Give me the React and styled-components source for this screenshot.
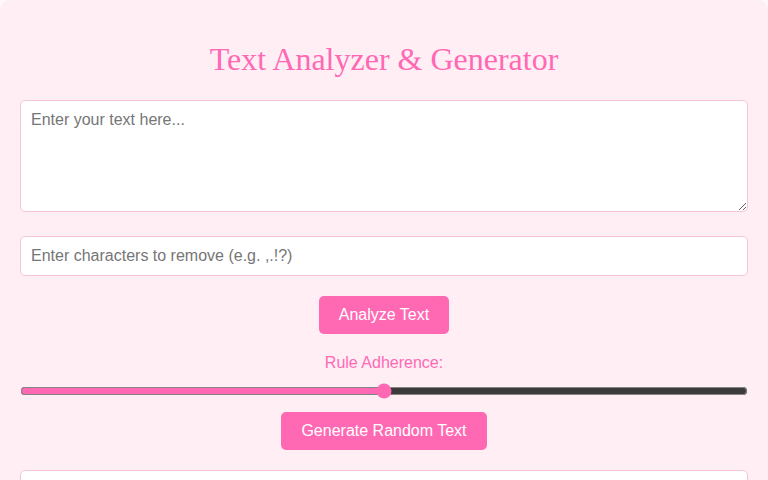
import styled, { createGlobalStyle } from "styled-components";
import { useState } from "react";

const GlobalStyle = createGlobalStyle`
    body {
        margin: 0;
        background-color: #fff7fa;
        font-family: "Liberation Sans", Arial, sans-serif;
    }
`;

function App(){
    const [text, setText] = useState("");
    const [chars, setChars] = useState("");
    const [adherence, setAdherence] = useState(50);

    return (
        <>
            <GlobalStyle />
            <Container>
                <Title>Text Analyzer &amp; Generator</Title>
                <TextArea
                    placeholder="Enter your text here..."
                    value={text}
                    onChange={(e) => setText(e.target.value)}
                />
                <Input
                    type="text"
                    placeholder="Enter characters to remove (e.g. ,.!?)"
                    value={chars}
                    onChange={(e) => setChars(e.target.value)}
                />
                <Button>Analyze Text</Button>
                <Label>Rule Adherence:</Label>
                <Slider
                    type="range"
                    min="0"
                    max="100"
                    value={adherence}
                    onChange={(e) => setAdherence(e.target.value)}
                />
                <Button>Generate Random Text</Button>
                <Output />
            </Container>
        </>
    );
}

const Container = styled.div`
    max-width: 800px;
    margin: 0 auto;
    padding: 20px;
    box-sizing: border-box;
    background-color: #ffeef4;
    border-radius: 10px;
    display: flex;
    flex-direction: column;
    align-items: center;
    min-height: 520px;
`;

const Title = styled.h1`
    font-family: "Liberation Serif", "Times New Roman", serif;
    font-weight: normal;
    font-size: 32px;
    color: #ff69b4;
    margin: 21px 0 22px;
    text-align: center;
`;

const TextArea = styled.textarea`
    width: 100%;
    height: 112px;
    padding: 10px;
    box-sizing: border-box;
    border: 1px solid #f5c6d6;
    border-radius: 5px;
    background: white;
    font-family: "Liberation Sans", Arial, sans-serif;
    font-size: 16px;
    margin: 0 0 24px;
    display: block;

    &::placeholder {
        color: #767676;
    }
`;

const Input = styled.input`
    width: 100%;
    height: 40px;
    padding: 10px;
    box-sizing: border-box;
    border: 1px solid #f5c6d6;
    border-radius: 5px;
    background: white;
    font-family: "Liberation Sans", Arial, sans-serif;
    font-size: 16px;
    margin: 0 0 20px;

    &::placeholder {
        color: #767676;
    }
`;

const Button = styled.button`
    background-color: #ff69b4;
    color: white;
    border: none;
    border-radius: 5px;
    padding: 10px 20px;
    font-family: "Liberation Sans", Arial, sans-serif;
    font-size: 16px;
    line-height: 18px;
    cursor: pointer;

    &:hover {
        background-color: #ff4fa6;
    }
`;

const Label = styled.label`
    color: #ff69b4;
    font-size: 16px;
    line-height: 18px;
    margin-top: 20px;
`;

const Slider = styled.input`
    width: 100%;
    margin: 11px 0 13px;
    accent-color: #ff69b4;
`;

const Output = styled.div`
    width: 100%;
    box-sizing: border-box;
    margin-top: 20px;
    min-height: 60px;
    background: white;
    border: 1px solid #f5c6d6;
    border-radius: 5px;
`;

export default App;
